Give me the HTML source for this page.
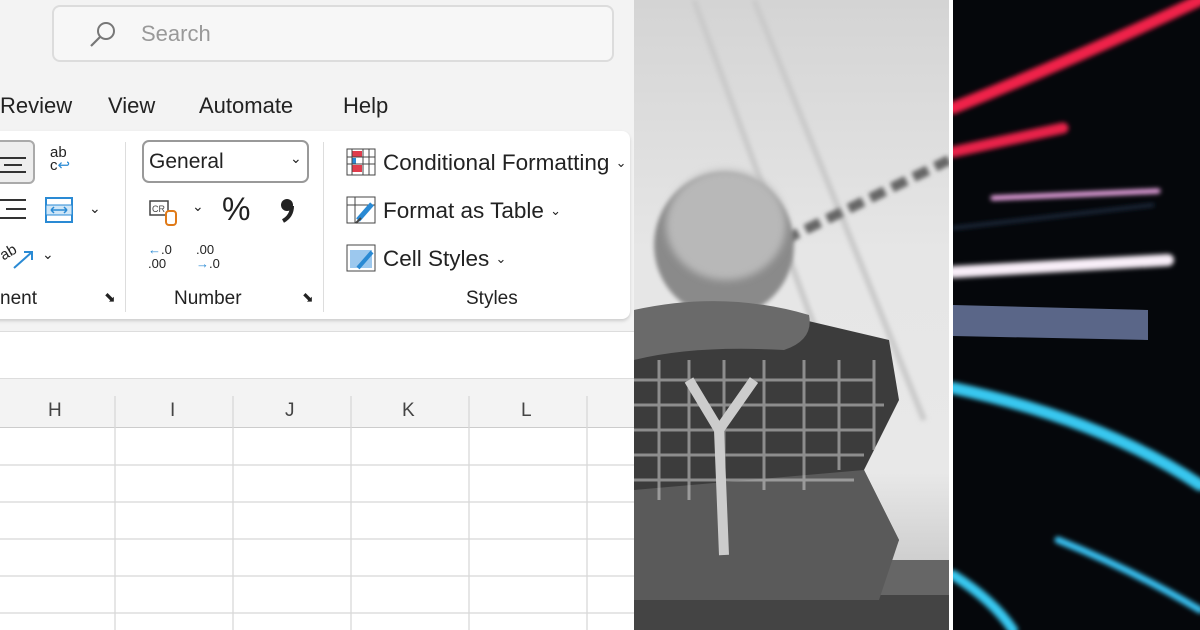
<!DOCTYPE html>
<html><head><style>
*{margin:0;padding:0;box-sizing:border-box}
body{width:1200px;height:630px;overflow:hidden;position:relative;background:#fff;font-family:"Liberation Sans",sans-serif}
.xl{position:absolute;left:0;top:0;width:634px;height:630px;background:#f3f3f3;overflow:hidden}
.t{position:absolute;color:#222;white-space:nowrap}
.ch{font-size:13px;position:relative;top:-3px}
</style></head><body>
<div class="xl">
  <div style="position:absolute;left:52px;top:5px;width:562px;height:57px;border:2px solid #dcdcdc;border-radius:8px;background:#f7f7f7"></div>
  <svg style="position:absolute;left:88px;top:20px" width="30" height="30"><circle cx="18" cy="11" r="8" fill="none" stroke="#777" stroke-width="2"/><line x1="12" y1="17" x2="3" y2="26" stroke="#777" stroke-width="2.2"/></svg>
  <div class="t" style="left:141px;top:21px;font-size:22px;color:#999">Search</div>
  <div class="t" style="left:0;top:93px;font-size:22px">Review</div>
  <div class="t" style="left:108px;top:93px;font-size:22px">View</div>
  <div class="t" style="left:199px;top:93px;font-size:22px">Automate</div>
  <div class="t" style="left:343px;top:93px;font-size:22px">Help</div>
  <div style="position:absolute;left:-10px;top:131px;width:640px;height:188px;background:#fff;border-radius:8px;box-shadow:0 2px 3px #ccc"></div>
  <div style="position:absolute;left:-10px;top:140px;width:45px;height:44px;border:2px solid #aaa;border-radius:6px;background:#eee"></div>
  <svg style="position:absolute;left:0;top:150px" width="30" height="30"><path d="M0 8h26M4 15h18M0 22h26" stroke="#333" stroke-width="2"/></svg>
  <div class="t" style="left:50px;top:146px;font-size:15px;line-height:13px">ab<br>c<span style="color:#2a8ad4">↩</span></div>
  <svg style="position:absolute;left:0;top:196px" width="30" height="30"><path d="M0 4h26M6 13h20M0 22h26" stroke="#333" stroke-width="2"/></svg>
  <svg style="position:absolute;left:44px;top:196px" width="30" height="28"><rect x="2" y="2" width="26" height="24" fill="#fff" stroke="#2a8ad4" stroke-width="2"/><rect x="2" y="9" width="26" height="10" fill="#cfe6f7" stroke="#2a8ad4"/><path d="M7 14h16M7 14l3-3M7 14l3 3M23 14l-3-3M23 14l-3 3" stroke="#2a8ad4" stroke-width="1.5" fill="none"/></svg>
  <div class="t" style="left:89px;top:200px;font-size:14px">⌄</div>
  <div class="t" style="left:0;top:244px;font-size:15px;transform:rotate(-30deg)">ab</div>
  <svg style="position:absolute;left:12px;top:248px" width="24" height="24"><path d="M2 20L20 4M12 4h8v8" stroke="#2a8ad4" stroke-width="2" fill="none"/></svg>
  <div class="t" style="left:42px;top:246px;font-size:14px">⌄</div>
  <div class="t" style="left:0;top:288px;font-size:19px">nent</div>
  <div class="t" style="left:104px;top:289px;font-size:14px">⬊</div>
  <div style="position:absolute;left:125px;top:142px;width:1px;height:170px;background:#ddd"></div>
  <div style="position:absolute;left:142px;top:140px;width:167px;height:43px;border:2px solid #999;border-radius:7px"></div>
  <div class="t" style="left:149px;top:150px;font-size:21px">General</div>
  <div class="t" style="left:290px;top:150px;font-size:14px">⌄</div>
  <svg style="position:absolute;left:148px;top:197px" width="34" height="32"><rect x="2" y="4" width="18" height="14" fill="none" stroke="#444" stroke-width="1.5"/><text x="4" y="15" font-size="9" fill="#444" font-family="Liberation Sans">CR</text><rect x="18" y="14" width="10" height="14" rx="3" fill="#fff" stroke="#e07a18" stroke-width="2"/></svg>
  <div class="t" style="left:192px;top:198px;font-size:14px">⌄</div>
  <div class="t" style="left:222px;top:191px;font-size:32px">%</div>
  <svg style="position:absolute;left:276px;top:196px" width="24" height="30"><circle cx="11" cy="9" r="6" fill="#222"/><path d="M16 10Q16 20 7 25" stroke="#222" stroke-width="4" fill="none"/></svg>
  <div class="t" style="left:148px;top:243px;font-size:13px;line-height:14px"><span style="color:#2a8ad4">←</span>.0<br>.00</div>
  <div class="t" style="left:196px;top:243px;font-size:13px;line-height:14px">.00<br><span style="color:#2a8ad4">→</span>.0</div>
  <div class="t" style="left:174px;top:288px;font-size:19px">Number</div>
  <div class="t" style="left:302px;top:289px;font-size:14px">⬊</div>
  <div style="position:absolute;left:323px;top:142px;width:1px;height:170px;background:#ddd"></div>
  <svg style="position:absolute;left:346px;top:148px" width="30" height="28"><rect x="1" y="1" width="28" height="26" fill="#fff" stroke="#444"/><rect x="6" y="3" width="10" height="6" fill="#e03c4c"/><rect x="6" y="17" width="10" height="7" fill="#e03c4c"/><rect x="6" y="10" width="4" height="6" fill="#2a8ad4"/><path d="M6 1v26M17 1v26M23 1v26M1 9h28M1 16h28" stroke="#444"/></svg>
  <div class="t" style="left:383px;top:150px;font-size:22.5px">Conditional Formatting <span class="ch">⌄</span></div>
  <svg style="position:absolute;left:346px;top:196px" width="30" height="28"><rect x="1" y="1" width="28" height="26" fill="#fff" stroke="#444"/><path d="M9 1v26M1 9h28" stroke="#444"/><path d="M12 24l14-16" stroke="#2a8ad4" stroke-width="5"/><path d="M10 27l5-5" stroke="#444" stroke-width="2"/></svg>
  <div class="t" style="left:383px;top:198px;font-size:22.5px">Format as Table <span class="ch">⌄</span></div>
  <svg style="position:absolute;left:346px;top:244px" width="30" height="28"><rect x="1" y="1" width="28" height="26" fill="#fff" stroke="#444"/><rect x="4" y="6" width="22" height="18" fill="#9cc8ee"/><path d="M12 24l14-16" stroke="#2a8ad4" stroke-width="4"/></svg>
  <div class="t" style="left:383px;top:246px;font-size:22.5px">Cell Styles <span class="ch">⌄</span></div>
  <div class="t" style="left:466px;top:288px;font-size:19px">Styles</div>
  <div style="position:absolute;left:0;top:331px;width:634px;height:48px;background:#fff;border-top:1px solid #ddd;border-bottom:1px solid #ddd"></div>
  <div style="position:absolute;left:0;top:396px;width:634px;height:234px;background:#fff"></div>
  <div style="position:absolute;left:0;top:396px;width:634px;height:32px;background:#f3f3f3;border-bottom:1px solid #ccc"></div>
  <div class="t" style="left:48px;top:400px;font-size:19px;color:#444">H</div>
  <div class="t" style="left:170px;top:400px;font-size:19px;color:#444">I</div>
  <div class="t" style="left:285px;top:400px;font-size:19px;color:#444">J</div>
  <div class="t" style="left:402px;top:400px;font-size:19px;color:#444">K</div>
  <div class="t" style="left:521px;top:400px;font-size:19px;color:#444">L</div>
  <svg style="position:absolute;left:0;top:396px" width="634" height="234"><g stroke="#d8d8d8" stroke-width="1.3"><path d="M115 0v234M233 0v234M351 0v234M469 0v234M587 0v234"/><path d="M0 69h634M0 106h634M0 143h634M0 180h634M0 217h634"/></g></svg>
</div>
<svg style="position:absolute;left:634px;top:0" width="315" height="630">
  <defs><linearGradient id="bg" x1="0" y1="0" x2="0" y2="1"><stop offset="0" stop-color="#d4d4d4"/><stop offset=".4" stop-color="#e6e6e6"/><stop offset=".75" stop-color="#e8e8e8"/><stop offset="1" stop-color="#bbb"/></linearGradient>
  <filter id="b"><feGaussianBlur stdDeviation="2"/></filter><filter id="b2"><feGaussianBlur stdDeviation="4"/></filter></defs>
  <rect width="315" height="630" fill="url(#bg)"/>
  <path d="M120 0L290 420M60 0L200 380" stroke="#cacaca" stroke-width="6" filter="url(#b)"/>
  <path d="M150 240L315 160" stroke="#666" stroke-width="10" stroke-dasharray="16 8" filter="url(#b)"/>
  <rect x="0" y="560" width="315" height="70" fill="#666"/>
  <rect x="0" y="595" width="315" height="35" fill="#444"/>
  <ellipse cx="90" cy="245" rx="70" ry="72" fill="#8a8a8a" filter="url(#b)"/>
  <ellipse cx="92" cy="225" rx="60" ry="55" fill="#b8b8b8" filter="url(#b2)"/>
  <path d="M0 330Q80 300 170 320L255 340L265 400L230 470L265 540L240 600L0 600Z" fill="#3c3c3c"/>
  <path d="M0 490L230 470L265 540L245 600L0 600Z" fill="#5a5a5a"/>
  <path d="M0 310Q90 290 175 315Q180 340 150 350Q60 345 0 360Z" fill="#6a6a6a"/>
  <g stroke="#d0d0d0" stroke-width="3" opacity=".55"><path d="M0 380h240M0 405h250M0 430h240M0 455h230M0 480h220M25 360v140M55 360v140M90 360v130M130 360v130M170 360v130M205 360v110M240 360v90"/></g>
  <path d="M55 380L85 430L120 380M85 430L90 555" stroke="#ccc" stroke-width="10" fill="none"/>
</svg>
<svg style="position:absolute;left:953px;top:0" width="247" height="630">
  <defs><filter id="g"><feGaussianBlur stdDeviation="2.5"/></filter></defs>
  <rect width="247" height="630" fill="#05070b"/>
  <g filter="url(#g)" fill="none" stroke-linecap="round">
    <path d="M0 108Q120 60 247 0" stroke="#f0204a" stroke-width="12"/>
    <path d="M0 152L110 128" stroke="#e8204a" stroke-width="11"/>
    <path d="M40 198L205 191" stroke="#f0a8e8" stroke-width="5"/>
    <path d="M0 228L200 205" stroke="#203048" stroke-width="3"/>
    <path d="M0 272L215 260" stroke="#f8eef8" stroke-width="12"/>
    <path d="M0 388Q150 420 247 485" stroke="#38c8f0" stroke-width="12"/>
    <path d="M105 540Q180 570 247 610" stroke="#38c0f0" stroke-width="7"/>
    <path d="M0 575Q40 600 60 630" stroke="#38c8f0" stroke-width="10"/>
  </g>
  <path d="M0 305L195 310V340L0 336Z" fill="#5a6688"/>
</svg>
</body></html>
